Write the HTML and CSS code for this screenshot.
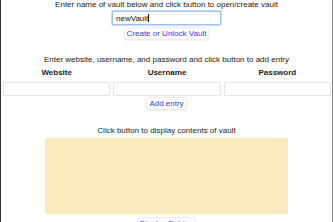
FILE: index.html
```html
<!DOCTYPE html>
<html lang="en">
<head>
    <meta charset="UTF-8">
    <meta name="viewport" content="width=device-width, initial-scale=1.0">
    <title>Password Vault</title>
    <link rel="stylesheet" href="styles.css">
</head>
<body>
    <div class="page">
        <div class="section open-vault">
            <p class="prompt">Enter name of vault below and click button to open/create vault</p>
            <div class="vault-field">
                <input type="text" id="vault-name" value="newVault">
                <span class="caret"></span>
            </div>
            <button class="btn">Create or Unlock Vault</button>
        </div>

        <div class="section add-entry">
            <p class="prompt">Enter website, username, and password and click button to add entry</p>
            <div class="entry-grid">
                <div class="col-label">Website</div>
                <div class="col-label">Username</div>
                <div class="col-label">Password</div>
                <input type="text" id="website">
                <input type="text" id="username">
                <input type="password" id="password">
            </div>
            <button class="btn">Add entry</button>
        </div>

        <div class="section show-entries">
            <p class="prompt">Click button to display contents of vault</p>
            <div id="entries" class="entries"></div>
            <button class="btn">Display Entries</button>
        </div>
    </div>
</body>
</html>
```

FILE: styles.css
```css
body {
    margin: 0;
    font-family: "Liberation Sans", Arial, sans-serif;
    font-size: 8px;
    color: #222;
    background: #fff;
}

.page {
    min-height: 222px;
    border-left: 1px solid #333;
    border-right: 1px solid #888;
    box-sizing: border-box;
    text-align: center;
}

.section {
    display: flex;
    flex-direction: column;
    align-items: center;
}

.prompt {
    margin: 0;
    line-height: 10px;
}

.vault-field {
    position: relative;
    margin-top: 1px;
}

#vault-name {
    width: 109px;
    height: 14px;
    box-sizing: border-box;
    border: 1px solid #9fc3ef;
    box-shadow: 0 0 0 1px #c9dcf6;
    border-radius: 1px;
    padding: 0 3px;
    font-family: inherit;
    font-size: 8px;
    color: #111;
    outline: none;
}

.caret {
    position: absolute;
    left: 36px;
    top: 3px;
    width: 1px;
    height: 8px;
    background: #111;
}

.btn {
    margin-top: 2px;
    padding: 1px 2px;
    font-family: inherit;
    font-size: 8px;
    line-height: 9px;
    color: #3838f0;
    background: #fff;
    border: 1px solid #ececec;
    border-radius: 3px;
    box-shadow: 0 1px 1px rgba(0, 0, 0, 0.06);
    cursor: pointer;
}

.add-entry {
    margin-top: 15px;
}

.entry-grid {
    align-self: stretch;
    display: grid;
    grid-template-columns: repeat(3, 1fr);
    column-gap: 3px;
    padding: 0 1px 0 2px;
    margin-top: 3px;
}

.col-label {
    font-weight: bold;
    line-height: 10px;
    margin-bottom: 4px;
}

.entry-grid input {
    height: 14px;
    box-sizing: border-box;
    border: 1px solid #e4e4e4;
    border-radius: 1px;
    min-width: 0;
}

.add-entry .btn {
    margin-top: 1px;
}

.show-entries {
    margin-top: 16px;
}

.entries {
    width: 243px;
    height: 76px;
    margin-top: 2px;
    background: #fcebbf;
}

.show-entries .btn {
    margin-top: 3px;
}
```
